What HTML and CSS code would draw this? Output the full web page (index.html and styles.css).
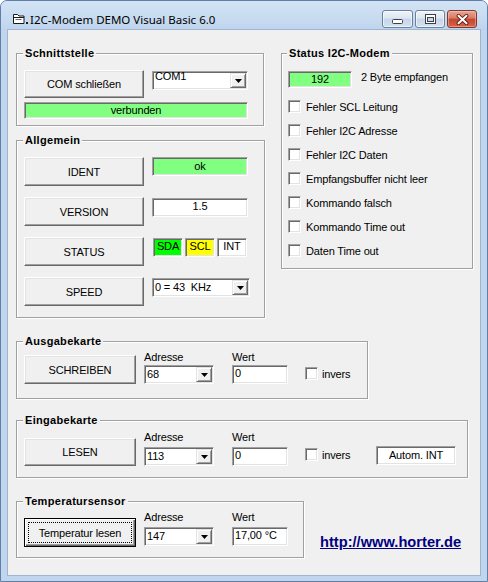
FILE: index.html
```html
<!DOCTYPE html>
<html lang="de">
<head>
<meta charset="utf-8">
<title>I2C-Modem DEMO Visual Basic 6.0</title>
<link rel="stylesheet" href="styles.css">
</head>
<body>
<div class="window">
  <div class="titlebar">
    <svg class="app-icon" width="17" height="12" viewBox="0 0 17 12">
      <path d="M1.5 1.5 h4 l1.5 1.5 h5 v7.5 h-10.5 z" fill="#fff" stroke="#1a1a1a"/>
      <path d="M1.5 4.5 h10.5" stroke="#1a1a1a"/>
      <path d="M3.5 6.5 h6" stroke="#6a6a6a"/>
      <rect x="14" y="9" width="2" height="2" fill="#1a1a1a"/>
    </svg>
    <span class="title">I2C-Modem DEMO Visual Basic 6.0</span>
    <div class="caption-buttons">
      <span class="cap-btn cap-min">
        <svg width="11" height="5" viewBox="0 0 11 5"><rect x="0.5" y="0.5" width="10" height="4" rx="1" fill="#fff" stroke="#3b3f46"/></svg>
      </span>
      <span class="cap-btn cap-max">
        <svg width="11" height="10" viewBox="0 0 11 10"><rect x="0.5" y="0.5" width="10" height="9" fill="#fff" stroke="#3b3f46"/><rect x="2.5" y="3.5" width="6" height="4" fill="#cbd8e8" stroke="#3b3f46"/></svg>
      </span>
      <span class="cap-btn cap-close">
        <svg width="13" height="11" viewBox="0 0 13 11"><path d="M2.5 1.8 L10.5 9.2 M10.5 1.8 L2.5 9.2" stroke="#5b1d12" stroke-width="3.8" stroke-linecap="round"/><path d="M2.5 1.8 L10.5 9.2 M10.5 1.8 L2.5 9.2" stroke="#fff" stroke-width="2" stroke-linecap="round"/></svg>
      </span>
    </div>
  </div>
  <div class="frame-body">
    <div class="client">
      <div class="top-row">
        <div class="left-col">
          <div class="group g-schnitt">
            <div class="group-title">Schnittstelle</div>
            <div class="s-row">
              <div class="btn btn-com">COM schließen</div>
              <div class="combo combo-com sunken">
                <span class="combo-text">COM1</span>
                <span class="drop"><svg width="7" height="4" viewBox="0 0 7 4"><polygon points="0,0 7,0 3.5,4" fill="#000"/></svg></span>
              </div>
            </div>
            <div class="lbl lbl-green lbl-verbunden sunken">verbunden</div>
          </div>
          <div class="group g-allg">
            <div class="group-title">Allgemein</div>
            <div class="a-rows">
              <div class="a-row">
                <div class="btn btn-a">IDENT</div>
                <div class="lbl lbl-green lbl-ok sunken">ok</div>
              </div>
              <div class="a-row">
                <div class="btn btn-a">VERSION</div>
                <div class="txt txt-version sunken">1.5</div>
              </div>
              <div class="a-row">
                <div class="btn btn-a">STATUS</div>
                <div class="status-boxes">
                  <div class="lbl-s lbl-sda sunken">SDA</div>
                  <div class="lbl-s lbl-scl sunken">SCL</div>
                  <div class="lbl-s lbl-int sunken">INT</div>
                </div>
              </div>
              <div class="a-row">
                <div class="btn btn-a">SPEED</div>
                <div class="combo combo-speed sunken">
                  <span class="combo-text">0 = 43  KHz</span>
                  <span class="drop"><svg width="7" height="4" viewBox="0 0 7 4"><polygon points="0,0 7,0 3.5,4" fill="#000"/></svg></span>
                </div>
              </div>
            </div>
          </div>
        </div>
        <div class="group g-status">
          <div class="group-title">Status I2C-Modem</div>
          <div class="st-row">
            <div class="lbl lbl-green lbl-192 sunken">192</div>
            <span class="st-text">2 Byte empfangen</span>
          </div>
          <div class="checks">
            <div class="check"><span class="chk sunken"></span>Fehler SCL Leitung</div>
            <div class="check"><span class="chk sunken"></span>Fehler I2C Adresse</div>
            <div class="check"><span class="chk sunken"></span>Fehler I2C Daten</div>
            <div class="check"><span class="chk sunken"></span>Empfangsbuffer nicht leer</div>
            <div class="check"><span class="chk sunken"></span>Kommando falsch</div>
            <div class="check"><span class="chk sunken"></span>Kommando Time out</div>
            <div class="check"><span class="chk sunken"></span>Daten Time out</div>
          </div>
        </div>
      </div>

      <div class="group g-aus">
        <div class="group-title">Ausgabekarte</div>
        <div class="io-row">
          <div class="btn btn-io">SCHREIBEN</div>
          <div class="field f-adr">
            <span class="field-label">Adresse</span>
            <div class="combo combo-io sunken">
              <span class="combo-text">68</span>
              <span class="drop"><svg width="7" height="4" viewBox="0 0 7 4"><polygon points="0,0 7,0 3.5,4" fill="#000"/></svg></span>
            </div>
          </div>
          <div class="field f-wert">
            <span class="field-label">Wert</span>
            <div class="txt txt-io sunken">0</div>
          </div>
          <div class="inv"><span class="chk sunken"></span>invers</div>
        </div>
      </div>

      <div class="group g-ein">
        <div class="group-title">Eingabekarte</div>
        <div class="io-row">
          <div class="btn btn-io">LESEN</div>
          <div class="field f-adr">
            <span class="field-label">Adresse</span>
            <div class="combo combo-io sunken">
              <span class="combo-text">113</span>
              <span class="drop"><svg width="7" height="4" viewBox="0 0 7 4"><polygon points="0,0 7,0 3.5,4" fill="#000"/></svg></span>
            </div>
          </div>
          <div class="field f-wert">
            <span class="field-label">Wert</span>
            <div class="txt txt-io sunken">0</div>
          </div>
          <div class="inv"><span class="chk sunken"></span>invers</div>
          <div class="lbl lbl-auto sunken">Autom. INT</div>
        </div>
      </div>

      <div class="bottom-row">
        <div class="group g-temp">
          <div class="group-title">Temperatursensor</div>
          <div class="io-row">
            <div class="btn btn-io btn-default"><span class="focus">Temperatur lesen</span></div>
            <div class="field f-adr">
              <span class="field-label">Adresse</span>
              <div class="combo combo-io sunken">
                <span class="combo-text">147</span>
                <span class="drop"><svg width="7" height="4" viewBox="0 0 7 4"><polygon points="0,0 7,0 3.5,4" fill="#000"/></svg></span>
              </div>
            </div>
            <div class="field f-wert">
              <span class="field-label">Wert</span>
              <div class="txt txt-io sunken">17,00 °C</div>
            </div>
          </div>
        </div>
        <a class="link" href="#">http://www.horter.de</a>
      </div>
    </div>
  </div>
</div>
</body>
</html>
```

FILE: styles.css
```css
* { box-sizing: border-box; }
html, body { margin: 0; padding: 0; }
body {
  width: 488px;
  height: 582px;
  overflow: hidden;
  background: #ffffff;
  font-family: "Liberation Sans", Arial, sans-serif;
  font-size: 11px;
  letter-spacing: -0.15px;
  color: #000;
}

/* window frame */
.window {
  width: 488px;
  height: 582px;
  border: 1px solid #5f7fa8;
  border-radius: 7px 7px 0 0;
  background: #c1d5ed;
  display: flex;
  flex-direction: column;
  overflow: hidden;
}
.titlebar {
  flex: none;
  height: 29px;
  display: flex;
  align-items: center;
  padding: 7px 10px 0 11px;
  background: linear-gradient(#d3e3f5, #bfd5ed);
}
.app-icon { flex: none; }
.title {
  margin-left: 1px;
  font-family: "Noto Sans", "Open Sans", sans-serif;
  font-size: 11.5px;
  letter-spacing: 0;
  color: #000;
  white-space: nowrap;
}
.caption-buttons {
  margin-left: auto;
  display: flex;
  gap: 2px;
  align-self: flex-start;
  margin-top: 2px;
}
.cap-btn {
  width: 30px;
  height: 18px;
  border: 1px solid #6c809c;
  border-radius: 3px;
  display: flex;
  align-items: center;
  justify-content: center;
  background: linear-gradient(#eef3fa 0%, #dce6f2 45%, #c6d6e9 50%, #d3e1f1 100%);
  box-shadow: inset 0 0 0 1px rgba(255,255,255,0.6);
}
.cap-min { width: 31px; }
.cap-min svg { margin-top: 5px; }
.cap-close {
  border-color: #80382b;
  background: linear-gradient(#eaa596 0%, #d97a64 45%, #c6452d 50%, #d2654c 100%);
  box-shadow: inset 0 0 0 1px rgba(255,210,200,0.45);
}
.frame-body {
  flex: 1;
  display: flex;
  padding: 0 7px 6px 7px;
}
.client {
  width: 472px;
  height: 545px;
  background: #f0f0f0;
  padding: 23px 0 0 8px;
  box-shadow: 0 0 0 1px #9fb5d1;
}

/* group frames */
.group {
  border: 1px solid #a0a0a0;
  box-shadow: inset 1px 1px 0 #fff, 1px 1px 0 #fff;
  padding: 0 6px 0 7px;
}
.group-title {
  display: table;
  margin: -8px 0 0 -1px;
  padding: 0 2px;
  height: 14px;
  line-height: 14px;
  background: #f0f0f0;
  font-weight: bold;
  letter-spacing: 0.3px;
  white-space: nowrap;
}

/* common controls */
.btn {
  flex: none;
  display: flex;
  align-items: center;
  justify-content: center;
  background: #f0f0f0;
  border: 1px solid;
  border-color: #fff #696969 #696969 #fff;
  box-shadow: inset -1px -1px 0 #a0a0a0, inset 1px 1px 0 #e3e3e3;
  white-space: nowrap;
}
.btn-default {
  border: 1px solid #000;
  box-shadow: inset 1px 1px 0 #fff, inset -1px -1px 0 #696969, inset -2px -2px 0 #a0a0a0;
  padding: 3px;
}
.focus {
  flex: 1;
  align-self: stretch;
  border: 1px dotted #000;
  display: flex;
  align-items: center;
  justify-content: center;
}
.sunken {
  border: 1px solid;
  border-color: #a0a0a0 #fff #fff #a0a0a0;
  box-shadow: inset 1px 1px 0 #696969, inset -1px -1px 0 #e3e3e3;
}
.combo {
  flex: none;
  display: flex;
  background: #fff;
  padding: 1px;
}
.combo-text {
  flex: 1;
  padding: 1px 0 0 1px;
  line-height: 13px;
  white-space: pre;
}
.drop {
  flex: none;
  width: 16px;
  display: flex;
  align-items: center;
  justify-content: center;
  background: #f0f0f0;
  border: 1px solid;
  border-color: #e3e3e3 #696969 #696969 #e3e3e3;
  box-shadow: inset 1px 1px 0 #fff, inset -1px -1px 0 #a0a0a0;
}
.lbl {
  flex: none;
  display: flex;
  align-items: center;
  justify-content: center;
  line-height: 13px;
  white-space: nowrap;
}
.lbl-green { background: #80ff80; }
.txt {
  flex: none;
  background: #fff;
  line-height: 13px;
  padding: 1px 0 0 2px;
  white-space: nowrap;
}
.chk {
  flex: none;
  width: 13px;
  height: 13px;
  background: #fff;
}

/* Schnittstelle */
.g-schnitt { width: 248px; padding-bottom: 6px; }
.s-row { display: flex; align-items: flex-start; margin-top: 10px; }
.btn-com { width: 120px; height: 28px; }
.combo-com { width: 96px; height: 19px; margin: 1px 0 0 8px; }
.combo-com .combo-text { margin-top: -3px; padding-top: 0; }
.lbl-verbunden { width: 224px; height: 17px; margin-top: 4px; }

/* Allgemein */
.g-allg { width: 249px; margin-top: 14px; padding-bottom: 11px; }
.a-rows { display: flex; flex-direction: column; gap: 11px; margin-top: 10px; }
.a-row { display: flex; align-items: flex-start; height: 29px; }
.btn-a { width: 120px; height: 29px; }
.lbl-ok { width: 96px; height: 19px; margin-left: 8px; }
.txt-version { width: 96px; height: 19px; margin: 1px 0 0 8px; padding-left: 0; text-align: center; }
.status-boxes { display: flex; gap: 2px; margin: 1px 0 0 9px; }
.lbl-s { width: 30px; height: 19px; line-height: 13px; padding-top: 1px; text-align: center; }
.lbl-sda { background: #00ff00; }
.lbl-scl { background: #ffff00; }
.lbl-int { background: #ffffff; }
.combo-speed { width: 98px; height: 19px; margin: 1px 0 0 8px; }

/* Status */
.top-row { display: flex; align-items: flex-start; }
.left-col { width: 249px; flex: none; }
.g-status { width: 192px; margin-left: 16px; padding: 0 6px 11px 6px; }
.st-row { display: flex; align-items: flex-start; margin-top: 11px; }
.lbl-192 { width: 64px; height: 17px; }
.st-text { margin-left: 9px; line-height: 13px; white-space: nowrap; }
.checks { display: flex; flex-direction: column; gap: 11px; margin-top: 12px; }
.check { display: flex; align-items: center; height: 13px; white-space: nowrap; }
.check .chk { margin-right: 5px; }

/* I/O groups */
.io-row { display: flex; align-items: flex-start; }
.btn-io { width: 112px; height: 29px; }
.field { flex: none; display: flex; flex-direction: column; }
.field-label { height: 13px; line-height: 13px; white-space: nowrap; }
.f-adr { margin-left: 8px; }
.f-wert { margin-left: 18px; }
.combo-io { width: 70px; height: 19px; }
.txt-io { width: 56px; height: 19px; }
.inv { flex: none; display: flex; align-items: center; width: 71px; height: 13px; margin-left: 17px; }
.inv .chk { margin-right: 4px; }

.g-aus { width: 352px; margin-top: 23px; padding-bottom: 14px; }
.g-aus .io-row { margin-top: 3px; }
.g-aus .btn-io { margin-top: 4px; }
.g-aus .combo-io, .g-aus .txt-io { margin-top: 1px; }
.g-aus .inv { margin-top: 16px; }

.g-ein { width: 452px; margin-top: 21px; padding-bottom: 11px; }
.g-ein .io-row { margin-top: 4px; }
.g-ein .btn-io { margin-top: 7px; height: 28px; }
.g-ein .combo-io, .g-ein .txt-io { margin-top: 3px; }
.g-ein .inv { margin-top: 17px; }
.lbl-auto { width: 80px; height: 19px; margin-top: 15px; background: #fff; }

.bottom-row { display: flex; align-items: flex-start; margin-top: 23px; }
.g-temp { flex: none; width: 288px; padding-bottom: 10px; }
.g-temp .io-row { margin-top: 3px; }
.g-temp .btn-io { margin-top: 7px; }
.g-temp .combo-io, .g-temp .txt-io { margin-top: 3px; }

.link {
  margin: 33px 0 0 16px;
  font-family: "Liberation Sans", Arial, sans-serif;
  font-weight: bold;
  font-size: 14.67px;
  line-height: 17px;
  letter-spacing: 0;
  color: #000080;
  text-decoration: underline;
  white-space: nowrap;
}
```
